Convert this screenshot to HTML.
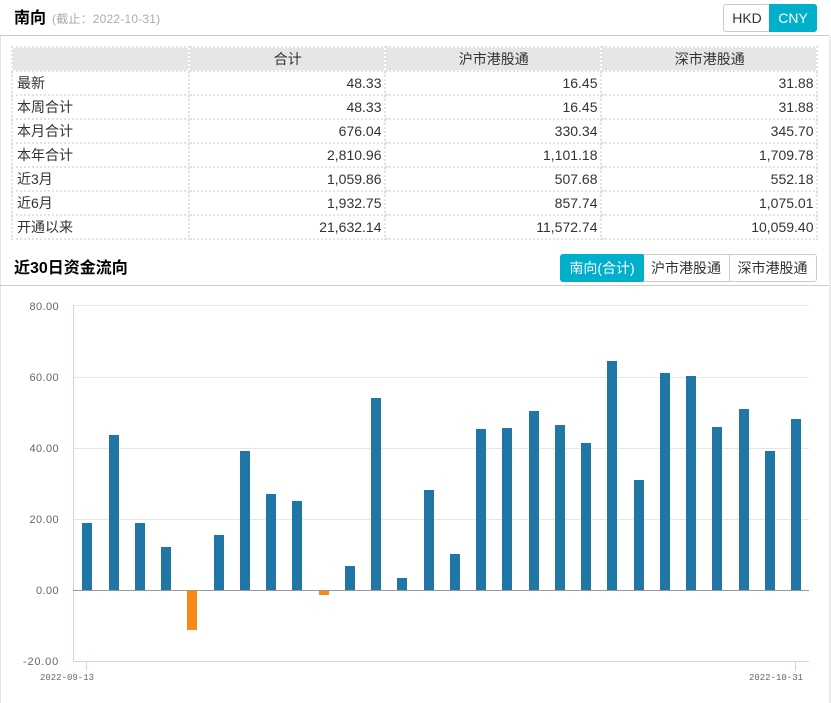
<!DOCTYPE html>
<html>
<head>
<meta charset="utf-8">
<style>
html,body{margin:0;padding:0;background:#fff;}
body{width:831px;height:703px;position:relative;overflow:hidden;font-family:"Liberation Sans","Noto Sans CJK SC",sans-serif;color:#333;}
.a{position:absolute;}
.t{position:absolute;white-space:nowrap;}
table{position:absolute;left:11px;top:46px;width:807px;height:194px;border-collapse:collapse;table-layout:fixed;font-size:14px;}
td,th{border:2px dotted #e2e2e2;padding:0 2.5px 0 4px;font-weight:normal;height:22px;line-height:22px;text-align:right;color:#333;overflow:hidden;white-space:nowrap;}
th{background:#e6e6e6;text-align:center;}
td:first-child{text-align:left;}
.btn{position:absolute;box-sizing:border-box;text-align:center;font-size:14px;}
</style>
</head>
<body>
<div class="a" style="left:0;top:36px;width:1px;height:667px;background:#e4e4e4"></div>
<div class="a" style="left:829px;top:36px;width:2px;height:667px;background:#ececec"></div>
<div class="a" style="left:0;top:35px;width:829px;height:1px;background:#ccc"></div>

<div class="t" style="left:14px;top:8px;font-size:16px;font-weight:bold;line-height:22px;color:#000">南向</div>
<div class="t" style="left:52px;top:9px;font-size:12px;line-height:20px;color:#aaa;letter-spacing:0.2px">(截止：2022-10-31)</div>

<div class="btn" style="left:723px;top:4px;width:47px;height:28px;border:1px solid #ccc;border-right:0;border-radius:3px 0 0 3px;line-height:26px;color:#333">HKD</div>
<div class="btn" style="left:769px;top:4px;width:48px;height:28px;background:#00afc9;border-radius:0 3px 3px 0;line-height:28px;color:#fff">CNY</div>

<table>
<colgroup><col style="width:177px"><col style="width:196px"><col style="width:216px"><col style="width:216px"></colgroup>
<tr><th></th><th>合计</th><th>沪市港股通</th><th>深市港股通</th></tr>
<tr><td>最新</td><td>48.33</td><td>16.45</td><td>31.88</td></tr>
<tr><td>本周合计</td><td>48.33</td><td>16.45</td><td>31.88</td></tr>
<tr><td>本月合计</td><td>676.04</td><td>330.34</td><td>345.70</td></tr>
<tr><td>本年合计</td><td>2,810.96</td><td>1,101.18</td><td>1,709.78</td></tr>
<tr><td>近3月</td><td>1,059.86</td><td>507.68</td><td>552.18</td></tr>
<tr><td>近6月</td><td>1,932.75</td><td>857.74</td><td>1,075.01</td></tr>
<tr><td>开通以来</td><td>21,632.14</td><td>11,572.74</td><td>10,059.40</td></tr>
</table>

<div class="t" style="left:14px;top:258px;font-size:16px;font-weight:bold;line-height:22px;color:#000">近30日资金流向</div>
<div class="btn" style="left:560px;top:254px;width:84px;height:28px;background:#00afc9;border-radius:3px 0 0 3px;line-height:28px;color:#fff">南向(合计)</div>
<div class="btn" style="left:643px;top:254px;width:87px;height:28px;border:1px solid #ccc;border-left:0;line-height:26px;color:#333">沪市港股通</div>
<div class="btn" style="left:729px;top:254px;width:88px;height:28px;border:1px solid #ccc;border-left:0;border-radius:0 3px 3px 0;line-height:26px;color:#333">深市港股通</div>
<div class="a" style="left:0;top:285px;width:829px;height:1px;background:#ccc"></div>

<svg class="a" style="left:0;top:0" width="831" height="703" viewBox="0 0 831 703">
<g fill="#e6e6e6" shape-rendering="crispEdges">
<rect x="73" y="305" width="736" height="1"/>
<rect x="73" y="377" width="736" height="1"/>
<rect x="73" y="448" width="736" height="1"/>
<rect x="73" y="519" width="736" height="1"/>
</g>
<g fill="#ccd6eb" shape-rendering="crispEdges">
<rect x="73" y="305" width="1" height="357"/>
<rect x="73" y="661" width="736" height="1"/>
<rect x="86" y="661" width="1" height="10"/>
<rect x="795" y="661" width="1" height="10"/>
</g>
<g fill="#2077a6" shape-rendering="crispEdges">
<rect x="82" y="523" width="10" height="68"/>
<rect x="109" y="435" width="10" height="156"/>
<rect x="135" y="523" width="10" height="68"/>
<rect x="161" y="547" width="10" height="44"/>
<rect x="214" y="535" width="10" height="56"/>
<rect x="240" y="451" width="10" height="140"/>
<rect x="266" y="494" width="10" height="97"/>
<rect x="292" y="501" width="10" height="90"/>
<rect x="345" y="566" width="10" height="25"/>
<rect x="371" y="398" width="10" height="193"/>
<rect x="397" y="578" width="10" height="13"/>
<rect x="424" y="490" width="10" height="101"/>
<rect x="450" y="554" width="10" height="37"/>
<rect x="476" y="429" width="10" height="162"/>
<rect x="502" y="428" width="10" height="163"/>
<rect x="529" y="411" width="10" height="180"/>
<rect x="555" y="425" width="10" height="166"/>
<rect x="581" y="443" width="10" height="148"/>
<rect x="607" y="361" width="10" height="230"/>
<rect x="634" y="480" width="10" height="111"/>
<rect x="660" y="373" width="10" height="218"/>
<rect x="686" y="376" width="10" height="215"/>
<rect x="712" y="427" width="10" height="164"/>
<rect x="739" y="409" width="10" height="182"/>
<rect x="765" y="451" width="10" height="140"/>
<rect x="791" y="419" width="10" height="172"/>
</g>
<g fill="#f98816" shape-rendering="crispEdges">
<rect x="187" y="591" width="10" height="39"/>
<rect x="319" y="591" width="10" height="4"/>
</g>
<rect x="73" y="590" width="736" height="1" fill="#999" shape-rendering="crispEdges"/>
<g font-family="'Liberation Sans',sans-serif" font-size="11" fill="#666" text-anchor="end" letter-spacing="0.4">
<text x="59" y="310">80.00</text>
<text x="59" y="381">60.00</text>
<text x="59" y="452">40.00</text>
<text x="59" y="523">20.00</text>
<text x="59" y="594">0.00</text>
<text x="59" y="665" letter-spacing="0.8">-20.00</text>
</g>
<g font-family="'Liberation Mono',monospace" font-size="9" fill="#666" text-anchor="middle">
<text x="67" y="680">2022-09-13</text>
<text x="776" y="680">2022-10-31</text>
</g>
</svg>
</body>
</html>
